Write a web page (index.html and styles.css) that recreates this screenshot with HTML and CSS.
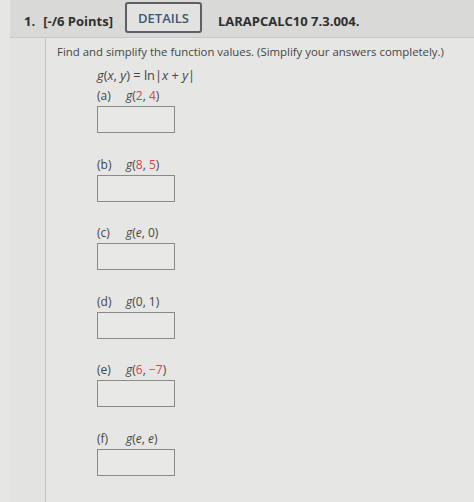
FILE: index.html
```html
<!DOCTYPE html>
<html>
<head>
<meta charset="utf-8">
<link rel="stylesheet" href="styles.css">
</head>
<body>
<div class="page">
  <div class="header">
    <span class="qnum">1.</span>
    <span class="points">[-/6 Points]</span>
    <span class="details">DETAILS</span>
    <span class="code">LARAPCALC10 7.3.004.</span>
  </div>
  <div class="main">
    <div class="gutter"></div>
    <div class="content">
      <p class="prompt">Find and simplify the function values. (Simplify your answers completely.)</p>
      <div class="indent">
        <p class="formula"><i>g</i>(<i>x</i>, <i>y</i>) = ln|<i>x</i> + <i>y</i>|</p>
        <div class="part">
          <p class="label"><span class="letter">(a)</span><i>g</i>(<span class="red">2</span>, <span class="red">4</span>)</p>
          <div class="box"></div>
        </div>
        <div class="part">
          <p class="label"><span class="letter">(b)</span><i>g</i>(<span class="red">8</span>, <span class="red">5</span>)</p>
          <div class="box"></div>
        </div>
        <div class="part">
          <p class="label"><span class="letter">(c)</span><i>g</i>(<i>e</i>, 0)</p>
          <div class="box"></div>
        </div>
        <div class="part">
          <p class="label"><span class="letter">(d)</span><i>g</i>(0, 1)</p>
          <div class="box"></div>
        </div>
        <div class="part">
          <p class="label"><span class="letter">(e)</span><i>g</i>(<span class="red">6</span>, <span class="red">−7</span>)</p>
          <div class="box"></div>
        </div>
        <div class="part">
          <p class="label"><span class="letter">(f)</span><i>g</i>(<i>e</i>, <i>e</i>)</p>
          <div class="box"></div>
        </div>
      </div>
    </div>
  </div>
</div>
</body>
</html>
```
FILE: styles.css
```css
html, body {
  margin: 0;
  padding: 0;
  background: #e6e6e4;
  font-family: "Open Sans", "DejaVu Sans", sans-serif;
  color: #454545;
}
.page {
  padding-left: 10px;
  height: 502px;
  display: flex;
  flex-direction: column;
}
.header {
  height: 38px;
  flex-shrink: 0;
  background: #d9d9d7;
  border-bottom: 1px solid #c9c9c7;
  display: flex;
  align-items: center;
  padding-left: 14px;
  padding-top: 4px;
  box-sizing: border-box;
  font-weight: bold;
  font-size: 13px;
  color: #2f2f2f;
}
.qnum { margin-right: 8px; }
.points { margin-right: 12px; }
.details {
  width: 77px;
  height: 31px;
  margin-top: -6px;
  box-sizing: border-box;
  border: 2px solid #5c5f63;
  border-radius: 3px;
  display: flex;
  align-items: center;
  justify-content: center;
  color: #3d5677;
  font-weight: 600;
  margin-right: 16px;
  background: #e2e2e0;
}
.main {
  flex: 1;
  display: flex;
}
.gutter {
  width: 35px;
  flex-shrink: 0;
  border-right: 1px solid #c4c4c2;
  background: #e3e3e1;
}
.content {
  flex: 1;
  min-width: 0;
  padding-left: 11px;
  padding-top: 4px;
}
p { margin: 0; }
.prompt {
  font-size: 11.4px;
  line-height: 20px;
  height: 22px;
  white-space: nowrap;
}
.indent {
  padding-left: 40px;
}
.formula {
  font-size: 12.8px;
  line-height: 22px;
}
.part {
  margin-bottom: 21.6px;
}
.label {
  font-size: 12px;
  line-height: 20px;
}
.letter {
  display: inline-block;
  width: 29px;
}
.red { color: #d6454d; }
.box {
  width: 78px;
  height: 27px;
  box-sizing: border-box;
  border: 1px solid #8a8a8a;
  background: #e8e8e6;
}
```
